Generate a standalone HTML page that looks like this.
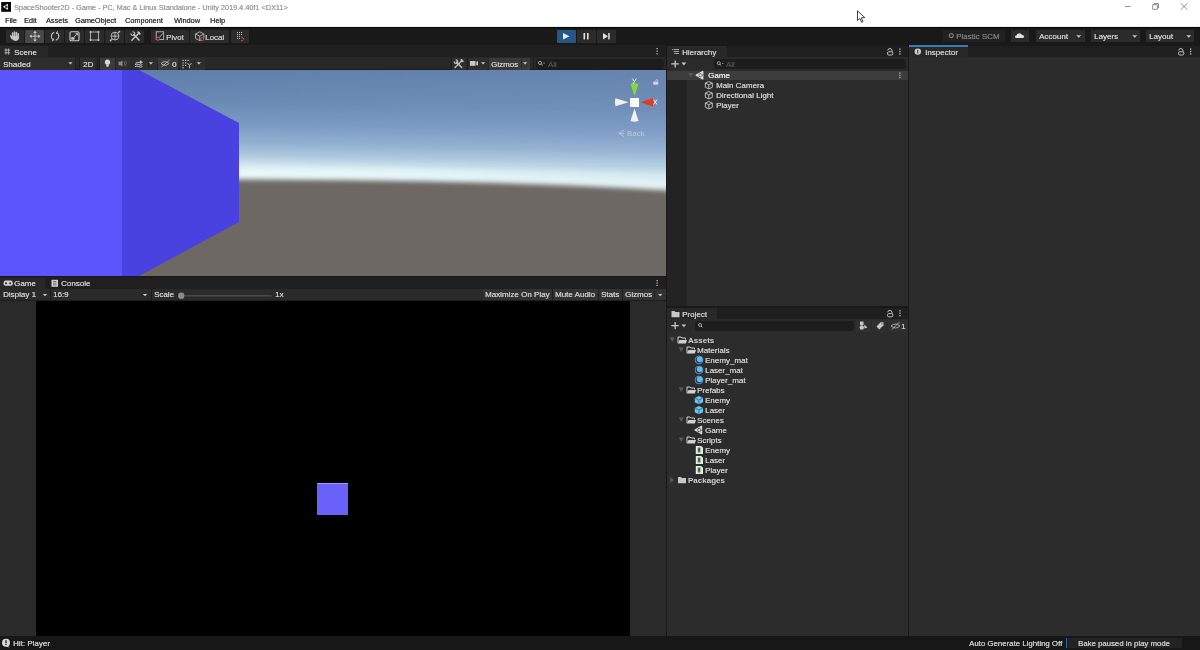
<!DOCTYPE html>
<html><head><meta charset="utf-8">
<style>
*{margin:0;padding:0;box-sizing:border-box}
html,body{width:1200px;height:650px;overflow:hidden;background:#191919;font-family:"Liberation Sans",sans-serif;}
.a{position:absolute}
.t{position:absolute;white-space:nowrap;color:#c4c4c4;font-size:8px;line-height:10px;margin-top:1px;-webkit-font-smoothing:antialiased;will-change:transform;text-shadow:0.2px 0 0 currentColor}
#title{left:0;top:0;width:1200px;height:27px;background:#fff}
#tb{left:0;top:27px;width:1200px;height:18px;background:#191919}
.btn{position:absolute;background:#2b2b2b;border-radius:1px}
.panel{position:absolute;background:#2c2c2c}
.strip{position:absolute;background:#1f1f1f}
.tab{position:absolute;background:#282828}
.ptb{position:absolute;background:#2a2a2a}
</style></head><body>
<!-- title bar -->
<div id="title" class="a">
  <svg class="a" style="left:0;top:0" width="13" height="14" viewBox="0 0 13 14"><rect x="1.2" y="2" width="9.8" height="9.8" fill="#050505"/>
<path d="M3.8,6.8 L7.4,4.4 L7.4,9.2 Z" fill="#8a8a8a" stroke="#8a8a8a" stroke-width="1.2" stroke-linejoin="round"/>
<circle cx="6.2" cy="6.8" r="0.9" fill="#222"/>
<circle cx="4.3" cy="6.8" r="0.8" fill="#fff"/><circle cx="7.3" cy="5.1" r="0.8" fill="#fff"/><circle cx="7.3" cy="8.5" r="0.8" fill="#fff"/></svg>
  <div class="t" style="left:14px;top:1.5px;color:#a0a0a0;font-size:7.3px">SpaceShooter2D - Game - PC, Mac &amp; Linux Standalone - Unity 2019.4.40f1 &lt;DX11&gt;</div>
  <div class="t" style="left:4.5px;top:15.2px;color:#3a3a3a;font-size:7.3px">File</div>
  <div class="t" style="left:24.4px;top:15.2px;color:#3a3a3a;font-size:7.3px">Edit</div>
  <div class="t" style="left:45.6px;top:15.2px;color:#3a3a3a;font-size:7.3px">Assets</div>
  <div class="t" style="left:75px;top:15.2px;color:#3a3a3a;font-size:7.3px">GameObject</div>
  <div class="t" style="left:125px;top:15.2px;color:#3a3a3a;font-size:7.3px">Component</div>
  <div class="t" style="left:173.7px;top:15.2px;color:#3a3a3a;font-size:7.3px">Window</div>
  <div class="t" style="left:210px;top:15.2px;color:#3a3a3a;font-size:7.3px">Help</div>
  <div class="a" style="left:0;top:26px;width:1200px;height:1px;background:#f0f0f0"></div>
  <svg class="a" style="left:1120px;top:0" width="80" height="14" viewBox="0 0 80 14">
    <path d="M5,6.5 H10.5" stroke="#666" stroke-width="0.7"/>
    <path d="M32.7,4.7 H37.3 V9.3 H32.7 Z M34,4.7 V3.5 H38.5 V8 H37.3" fill="none" stroke="#666" stroke-width="0.7"/>
    <path d="M60.7,3.3 L67.5,9.7 M67.5,3.3 L60.7,9.7" stroke="#666" stroke-width="0.7"/>
  </svg>
  <svg class="a" style="left:856px;top:10px" width="10" height="14" viewBox="0 0 10 14"><path d="M1.5,0.8 L1.5,10.5 L3.8,8.4 L5.6,12.2 L7,11.6 L5.3,7.8 L8.8,7.6 Z" fill="#fff" stroke="#111" stroke-width="0.8" stroke-linejoin="round"/></svg>
</div>
<!-- main toolbar -->
<div id="tb" class="a">
  <div class="a" style="left:0;top:0;width:1200px;height:1px;background:#050505"></div>
  <div class="btn" style="left:6px;top:3px;width:18px;height:12.5px"></div>
  <div class="btn" style="left:25px;top:3px;width:19px;height:12.5px;background:#484848"></div>
  <div class="btn" style="left:45px;top:3px;width:19px;height:12.5px"></div>
  <div class="btn" style="left:65px;top:3px;width:19px;height:12.5px"></div>
  <div class="btn" style="left:85px;top:3px;width:19px;height:12.5px"></div>
  <div class="btn" style="left:105px;top:3px;width:19px;height:12.5px"></div>
  <div class="btn" style="left:125px;top:3px;width:19px;height:12.5px"></div>
  <div class="btn" style="left:151px;top:3px;width:38px;height:12.5px"></div>
  <div class="btn" style="left:190px;top:3px;width:39px;height:12.5px"></div>
  <div class="btn" style="left:231px;top:3px;width:18px;height:12.5px"></div>
  <svg class="a" style="left:0;top:0" width="260" height="18" viewBox="0 27 260 18">
    <g fill="none" stroke="#c8c8c8" stroke-linecap="round" stroke-linejoin="round">
      <!-- hand -->
      <g stroke="#c8c8c8" stroke-width="1.5" stroke-linecap="round">
        <path d="M12.6,33 V37.5 M14.5,32.1 V37 M16.4,32.5 V37 M18.2,33.8 V37.5 M10.6,35.8 L12.2,38.6"/>
      </g>
      <path d="M11.9,36.3 H18.9 V38.5 Q18.5,40.9 15.6,40.9 Q13,40.9 12,38.5 Z" fill="#c8c8c8" stroke="none"/>
      <!-- move -->
      <path d="M35,32 V40.5 M30.8,36.2 H39.2" stroke-width="0.9"/>
    </g>
    <g fill="#c8c8c8">
      <path d="M35,30.8 L33.2,33 L36.8,33 Z M35,41.8 L33.2,39.5 L36.8,39.5 Z M29.5,36.2 L31.8,34.4 L31.8,38 Z M40.5,36.2 L38.2,34.4 L38.2,38 Z"/>
    </g>
    <g fill="none" stroke="#c8c8c8" stroke-width="1.1">
      <!-- rotate -->
      <path d="M53.3,40 A4.3,4.3 0 0 1 54.2,32.3"/>
      <path d="M56.7,32.4 A4.3,4.3 0 0 1 55.8,40.2"/>
      <path d="M52,41 L53.6,40.2 L53.5,38.5 M58,31.5 L56.5,32.3 L56.7,34" stroke-width="0.9"/>
      <!-- scale -->
      <rect x="70" y="31.7" width="9" height="9" rx="1.3"/>
      <rect x="71.3" y="37.2" width="3.2" height="2.5" fill="#c8c8c8" stroke="none"/>
      <path d="M74,37 L77.3,33.5 M75.5,33.3 L77.5,33.3 L77.5,35.3" stroke-width="0.9"/>
      <!-- rect -->
      <rect x="90.5" y="32" width="8" height="8" stroke-width="0.8"/>
    </g>
    <g fill="#c8c8c8">
      <circle cx="90.5" cy="32" r="1"/><circle cx="98.5" cy="32" r="1"/><circle cx="90.5" cy="40" r="1"/><circle cx="98.5" cy="40" r="1"/>
    </g>
    <g fill="none" stroke="#c8c8c8" stroke-width="0.9">
      <!-- transform -->
      <circle cx="115" cy="36.1" r="3.9" stroke-width="0.9"/>
      <path d="M115,32.5 V39.7 M111.4,36.1 H118.6" stroke-width="0.9"/>
      <path d="M110.6,40.5 L112.3,38.8 M117.7,33.4 L119.4,31.7" stroke-width="0.8"/>
    </g>
    <g fill="#c8c8c8"><circle cx="110.6" cy="40.5" r="0.9"/><circle cx="119.4" cy="31.7" r="0.9"/></g>
    <g fill="none" stroke="#c8c8c8">
      <!-- custom tool -->
      <path d="M133.8,34.6 L139,40" stroke-width="1.5" stroke-linecap="round"/>
      <path d="M132.47,31.73 A1.9,1.9 0 1 1 130.93,33.27" stroke-width="1.1"/>
      <path d="M139,33 L131.8,40.3" stroke-width="1.3" stroke-linecap="round"/>
      <path d="M138.2,32.2 L139.8,33.8" stroke-width="1.8" stroke-linecap="round"/>
    </g>
    <!-- pivot icon -->
    <g fill="none" stroke="#c8c8c8" stroke-width="0.8">
      <rect x="156.2" y="31.8" width="7.5" height="7.8"/>
      <path d="M159,37.8 L163,33.3"/>

      <path d="M195.5,34 L199.7,31.8 L203.9,34 L203.9,38.4 L199.7,40.6 L195.5,38.4 Z M195.5,34 L199.7,36.2 L203.9,34 M199.7,36.2 V40.6"/>
    </g>
    <circle cx="158" cy="38.8" r="1.5" fill="#2b2b2b" stroke="#e0533a" stroke-width="0.9"/>
    <circle cx="202.2" cy="39.1" r="1.5" fill="#2b2b2b" stroke="#e0533a" stroke-width="0.9"/>
    <g fill="#c8c8c8">
      <rect x="237" y="32" width="1" height="1"/><rect x="239" y="32" width="1" height="1"/><rect x="241" y="32" width="1" height="1"/>
      <rect x="237" y="34" width="1" height="1"/><rect x="239" y="34" width="1" height="1"/><rect x="241" y="34" width="1" height="1"/>
      <rect x="237" y="36" width="1" height="1"/><rect x="239" y="36" width="1" height="1"/>
      <rect x="237" y="38" width="1" height="1"/><rect x="239" y="38" width="1" height="1"/>
    </g>
    <path d="M241,37 Q244,37.5 243.5,39.5 Q243,41 241,40.8" fill="none" stroke="#e0533a" stroke-width="0.9"/>
  </svg>
  <div class="t" style="left:165.6px;top:4.9px;color:#c4c4c4">Pivot</div>
  <div class="t" style="left:205.2px;top:4.9px;color:#c4c4c4">Local</div>
  <div class="btn" style="left:557px;top:3px;width:18.6px;height:12.5px;background:#245686"></div>
  <div class="btn" style="left:577px;top:3px;width:18.6px;height:12.5px"></div>
  <div class="btn" style="left:597px;top:3px;width:18.6px;height:12.5px"></div>
  <svg class="a" style="left:540px;top:0" width="90" height="18" viewBox="540 27 90 18">
    <path d="M563,33 L569.5,36.2 L563,39.5 Z" fill="#e8e8e8"/>
    <rect x="583.5" y="33" width="1.6" height="6.4" fill="#e0e0e0"/>
    <rect x="587" y="33" width="1.6" height="6.4" fill="#e0e0e0"/>
    <path d="M603,33 L608,36.2 L603,39.5 Z" fill="#e0e0e0"/>
    <rect x="608.2" y="33" width="1.5" height="6.4" fill="#e0e0e0"/>
  </svg>
  <div class="btn" style="left:942.5px;top:3px;width:62px;height:12px;background:#212121"></div>
  <div class="t" style="left:955.5px;top:4.2px;color:#7a7a7a">Plastic SCM</div>
  <svg class="a" style="left:948px;top:5px" width="8" height="8" viewBox="0 0 8 8"><circle cx="3.3" cy="3.6" r="2" fill="none" stroke="#7a7a7a" stroke-width="1.1"/></svg>
  <div class="btn" style="left:1011px;top:3px;width:18px;height:12px"></div>
  <svg class="a" style="left:1011px;top:0" width="18" height="18" viewBox="0 0 18 18"><path d="M5.5,11 Q4,11 4,9.7 Q4,8.4 5.5,8.4 Q5.8,6.5 8.2,6.3 Q10.5,6.3 11,8 Q13,7.8 13.2,9.6 Q13.2,11 11.8,11 Z" fill="#e0e0e0"/></svg>
  <div class="btn" style="left:1036px;top:3px;width:48.5px;height:12px"></div>
  <div class="t" style="left:1039px;top:4.2px;color:#c8c8c8">Account</div>
  <div class="btn" style="left:1091px;top:3px;width:48.5px;height:12px"></div>
  <div class="t" style="left:1093.7px;top:4.2px;color:#c8c8c8">Layers</div>
  <div class="btn" style="left:1146px;top:3px;width:48px;height:12px"></div>
  <div class="t" style="left:1149px;top:4.2px;color:#c8c8c8">Layout</div>
  <svg class="a" style="left:1070px;top:0" width="130" height="18" viewBox="1070 27 130 18">
    <path d="M1076.3,35.2 L1081.2,35.2 L1078.75,37.8 Z M1132.3,35.2 L1137.2,35.2 L1134.75,37.8 Z M1186.3,35.2 L1191.2,35.2 L1188.75,37.8 Z" fill="#c8c8c8"/>
  </svg>
</div>
<!-- scene panel -->
<div class="strip" style="left:0;top:45px;width:666px;height:12px"></div>
<div class="tab" style="left:0;top:46px;width:47.5px;height:11px"></div>
<svg class="a" style="left:0;top:45px" width="666" height="12" viewBox="0 45 666 12">
  <path d="M6,48.5 V54.5 M8.6,48.5 V54.5 M4.5,50 H10.2 M4.5,52.8 H10.2" stroke="#c8c8c8" stroke-width="0.8" fill="none"/>
  <rect x="656.5" y="48" width="1.2" height="1.2" fill="#c8c8c8"/><rect x="656.5" y="50.6" width="1.2" height="1.2" fill="#c8c8c8"/><rect x="656.5" y="53.2" width="1.2" height="1.2" fill="#c8c8c8"/>
</svg>
<div class="t" style="left:14.3px;top:46.5px;color:#c8c8c8">Scene</div>
<div class="ptb" style="left:0;top:57px;width:666px;height:13px;background:#282828"></div>
<div class="a" style="left:0;top:69.3px;width:666px;height:0.7px;background:#1a1a1a"></div>
<div class="a" style="left:0;top:57.5px;width:75px;height:12px;background:#2d2d2d"></div>
<div class="a" style="left:80px;top:58px;width:15px;height:11.5px;background:#2e2e2e"></div>
<div class="a" style="left:116px;top:58px;width:14.6px;height:11.5px;background:#2e2e2e"></div>
<div class="a" style="left:131.7px;top:58px;width:25.3px;height:11.5px;background:#2e2e2e"></div>
<div class="a" style="left:180px;top:58px;width:24.7px;height:11.5px;background:#2e2e2e"></div>
<div class="a" style="left:452px;top:58px;width:13.6px;height:11.5px;background:#2e2e2e"></div>
<div class="a" style="left:467.5px;top:58px;width:20px;height:11.5px;background:#2e2e2e"></div>
<div class="a" style="left:147.7px;top:59.5px;width:0.8px;height:8.5px;background:#222"></div>
<div class="a" style="left:194.3px;top:59.5px;width:0.8px;height:8.5px;background:#222"></div>
<div class="t" style="left:2.5px;top:58.5px;color:#c8c8c8">Shaded</div>
<div class="a" style="left:75px;top:57px;width:1px;height:13px;background:#1c1c1c"></div>
<div class="a" style="left:78.5px;top:57px;width:1px;height:13px;background:#1c1c1c"></div>
<div class="t" style="left:82.5px;top:58.5px;color:#c8c8c8">2D</div>
<div class="a" style="left:96.5px;top:57px;width:1px;height:13px;background:#1c1c1c"></div>
<div class="a" style="left:98.5px;top:57px;width:1px;height:13px;background:#1c1c1c"></div>
<div class="a" style="left:100px;top:58px;width:15px;height:11.5px;background:#393939"></div>
<div class="a" style="left:158px;top:58px;width:20px;height:11.5px;background:#393939"></div>
<div class="a" style="left:489px;top:58px;width:41px;height:11.5px;background:#393939"></div>
<div class="a" style="left:450.6px;top:57px;width:1px;height:13px;background:#1c1c1c"></div>
<div class="a" style="left:466.5px;top:57px;width:1px;height:13px;background:#1c1c1c"></div>
<div class="a" style="left:532.5px;top:57px;width:1px;height:13px;background:#1c1c1c"></div>
<div class="a" style="left:520.5px;top:59px;width:1px;height:9px;background:#2a2a2a"></div>
<div class="a" style="left:535.6px;top:59px;width:128px;height:10px;background:#1d1d1d;border-radius:3px"></div>
<div class="t" style="left:491px;top:58.5px;color:#c8c8c8">Gizmos</div>
<div class="t" style="left:547.5px;top:58.5px;color:#606060;text-shadow:none">All</div>
<div class="t" style="left:172px;top:58.5px;color:#c8c8c8">0</div>
<svg class="a" style="left:0;top:57px" width="666" height="13" viewBox="0 57 666 13">
  <g fill="#c8c8c8">
    <path d="M68.3,62.3 L72.5,62.3 L70.4,64.5 Z"/>
    <path d="M148.8,62.3 L153,62.3 L150.9,64.5 Z"/>
    <path d="M196.8,62.3 L201,62.3 L198.9,64.5 Z"/>
    <path d="M481,62.3 L485.2,62.3 L483.1,64.5 Z"/>
    <path d="M523,62.3 L527.2,62.3 L525.1,64.5 Z"/>
  </g>
  <!-- light bulb -->
  <circle cx="107.5" cy="62.2" r="2.6" fill="#d8d8d8"/>
  <rect x="106.3" y="64.5" width="2.4" height="2.2" fill="#d8d8d8"/>
  <!-- audio -->
  <path d="M118.5,61.8 H120.5 L122.5,60.5 V66.5 L120.5,65.2 H118.5 Z" fill="#8a8a8a"/>
  <path d="M124,61.5 Q125,63.5 124,65.5 M125.6,60.8 Q127,63.5 125.6,66.2" stroke="#8a8a8a" stroke-width="0.6" fill="none"/>
  <!-- effects -->
  <path d="M135,64.6 Q137,63.5 138.8,64.6 Q140.6,65.7 142.4,64.6 M135,66.6 Q137,65.5 138.8,66.6 Q140.6,67.7 142.4,66.6" stroke="#c8c8c8" stroke-width="1" fill="none"/>
  <path d="M135.5,63.2 Q137.3,61.8 139,62.6" stroke="#c8c8c8" stroke-width="0.9" fill="none"/>
  <path d="M140.8,59.8 L141.5,61.5 L143.2,62.2 L141.5,62.9 L140.8,64.6 L140.1,62.9 L138.4,62.2 L140.1,61.5 Z" fill="#c8c8c8"/>
  <!-- hidden eye -->
  <path d="M161,63.5 Q165,59.8 169,63.5 Q165,67.2 161,63.5 Z" stroke="#c8c8c8" stroke-width="0.8" fill="none"/>
  <path d="M161.5,67 L169.5,60" stroke="#c8c8c8" stroke-width="0.8"/>
  <!-- grid -->
  <g fill="#c8c8c8"><rect x="182.5" y="59.8" width="1.2" height="1.2"/><rect x="185" y="59.8" width="1.2" height="1.2"/><rect x="187.5" y="59.8" width="1.2" height="1.2"/><rect x="182.5" y="62.3" width="1.2" height="1.2"/><rect x="185" y="62.3" width="1.2" height="1.2"/><rect x="182.5" y="64.8" width="1.2" height="1.2"/><rect x="182.5" y="67.2" width="1.2" height="1.2"/><rect x="185" y="64.8" width="1.2" height="1.2"/></g>
  <path d="M187.5,63 L189.5,65.5 L191.5,63 M189.5,65.5 V68.2" stroke="#c8c8c8" stroke-width="0.9" fill="none"/>
  <!-- tools -->
  <path d="M456.3,62 L461.7,67.4" stroke="#c8c8c8" stroke-width="1.4" stroke-linecap="round"/>
  <path d="M455.67,59.9 A1.8,1.8 0 1 1 454.2,61.4" stroke="#c8c8c8" stroke-width="1.05" fill="none"/>
  <path d="M462,60.5 L455,67.5" stroke="#c8c8c8" stroke-width="1.2" stroke-linecap="round"/>
  <path d="M461.3,59.8 L462.8,61.3" stroke="#c8c8c8" stroke-width="1.7" stroke-linecap="round"/>
  <!-- camera -->
  <rect x="470" y="61" width="5.5" height="4.8" fill="#c8c8c8"/>
  <path d="M476.2,62 L478,61 V65.8 L476.2,64.8 Z" fill="#c8c8c8"/>
  <!-- search -->
  <circle cx="540" cy="62.9" r="1.6" fill="none" stroke="#c8c8c8" stroke-width="0.8"/>
  <path d="M541.2,64 L542.8,65.4" stroke="#c8c8c8" stroke-width="0.8"/>
  <path d="M543,62.8 L545,62.8 L544,63.8 Z" fill="#c8c8c8"/>
</svg>
<svg class="a" style="left:0;top:70px" width="666" height="206" viewBox="0 70 666 206">
<defs>
<linearGradient id="sky" x1="0" y1="70" x2="0" y2="276" gradientUnits="userSpaceOnUse" gradientTransform="rotate(1.2 400 180)">
<stop offset="0" stop-color="#5a7aa6"/>
<stop offset="0.17" stop-color="#6586b2"/>
<stop offset="0.28" stop-color="#7696c1"/>
<stop offset="0.37" stop-color="#8eaece"/>
<stop offset="0.43" stop-color="#acc8de"/>
<stop offset="0.48" stop-color="#d0e6ee"/>
<stop offset="0.53" stop-color="#e0f2f4"/>
<stop offset="0.6" stop-color="#e0f2f4"/>
</linearGradient>
<linearGradient id="bandfade" x1="0" y1="0" x2="666" y2="0" gradientUnits="userSpaceOnUse">
<stop offset="0" stop-color="#f2ffff" stop-opacity="0.85"/>
<stop offset="0.6" stop-color="#f2ffff" stop-opacity="0.7"/>
<stop offset="1" stop-color="#e8f4f4" stop-opacity="0.35"/>
</linearGradient>
<filter id="bl" x="-5%" y="-20%" width="110%" height="140%"><feGaussianBlur stdDeviation="2.4"/></filter>
<filter id="bl2" x="-5%" y="-50%" width="110%" height="200%"><feGaussianBlur stdDeviation="3.5"/></filter>
</defs>
<rect x="0" y="70" width="666" height="206" fill="url(#sky)"/>
<path d="M-10,166 L240,168.5 C400,169 550,172 676,180 L676,188 C550,180 400,177 240,177 L-10,175 Z" fill="url(#bandfade)" filter="url(#bl2)"/>
<linearGradient id="tr" x1="0" y1="0" x2="666" y2="0" gradientUnits="userSpaceOnUse"><stop offset="0" stop-color="#fff" stop-opacity="0"/><stop offset="1" stop-color="#dfeaff" stop-opacity="0.1"/></linearGradient>
<rect x="0" y="70" width="666" height="95" fill="url(#tr)"/>
<path d="M-10,178 L240,179.5 C400,180 550,183 676,191 L676,290 L-10,290 Z" fill="#6d6763" filter="url(#bl)"/>
<polygon points="0,70 122,70 122,276 0,276" fill="#5c55fb"/>
<polygon points="122,70 139,70 239,123 239,222 139,276 122,276" fill="#4a42e0"/>
<g>
  <path d="M630.5,84 Q634.5,82.5 638.5,84 L634.5,96 Z" fill="#86d83a"/>
  <path d="M653,98 Q654.5,102.3 653,106.5 L640.5,102.3 Z" fill="#e23c1e"/>
  <path d="M615.5,98.2 Q614,102.3 615.5,106.3 L628.5,102.3 Z" fill="#f0f0ec"/>
  <path d="M630.5,121 Q634.5,122.5 638.5,121 L634.5,108.5 Z" fill="#f0f0ec"/>
  <rect x="630" y="98" width="9" height="9" fill="#fafafa"/>
  <path d="M632.3,78.5 L634.3,81.5 M636.3,78.5 L633,84" stroke="#f4f4f4" stroke-width="0.9" fill="none"/>
  <path d="M653.5,99.5 L657,104.5 M657,99.5 L653.5,104.5" stroke="#f4f4f4" stroke-width="0.9" fill="none"/>
  <path d="M655.5,80.5 A1.6,1.6 0 0 1 658.3,80.8" stroke="#d0d4d8" stroke-width="0.8" fill="none"/>
  <rect x="653.2" y="81.5" width="5" height="3.2" fill="#d0d4d8"/>
  <path d="M624,130.3 L618.8,133.4 L624,136.5 M624,133.4 H619.5" stroke="#c8cdc8" stroke-width="0.75" fill="none"/>
</g>
</svg>
<div class="t" style="left:626.5px;top:127.8px;color:#c4c8c4;font-size:8px;text-shadow:none">Back</div>
<!-- game panel -->
<div class="strip" style="left:0;top:277px;width:666px;height:12px"></div>
<div class="tab" style="left:0;top:277.5px;width:45.4px;height:11.5px"></div>
<svg class="a" style="left:0;top:277px" width="666" height="12" viewBox="0 277 666 12">
  <path d="M5.5,280.6 H10.8 Q12.8,280.6 12.8,283.2 Q12.8,285.8 10.8,285.8 H5.5 Q3.5,285.8 3.5,283.2 Q3.5,280.6 5.5,280.6 Z" fill="#d0d0d0"/>
  <circle cx="6" cy="283.2" r="1" fill="#282828"/><circle cx="10.2" cy="283.2" r="1" fill="#282828"/>
  <rect x="51.5" y="279.8" width="6.5" height="7" fill="#d0d0d0"/>
  <path d="M53,281.5 H56.5 M53,283.2 H56.5 M53,284.9 H56.5" stroke="#333" stroke-width="0.6"/>
  <rect x="656.5" y="280" width="1.2" height="1.2" fill="#c8c8c8"/><rect x="656.5" y="282.4" width="1.2" height="1.2" fill="#c8c8c8"/><rect x="656.5" y="284.8" width="1.2" height="1.2" fill="#c8c8c8"/>
</svg>
<div class="t" style="left:14.2px;top:277.9px;color:#c8c8c8">Game</div>
<div class="t" style="left:61px;top:277.9px;color:#c8c8c8">Console</div>
<div class="ptb" style="left:0;top:288.5px;width:666px;height:12.5px"></div>
<div class="a" style="left:483px;top:289px;width:183px;height:11.5px;background:#323232"></div>
<div class="a" style="left:49.8px;top:289px;width:1px;height:12px;background:#1c1c1c"></div>
<div class="a" style="left:0;top:300.4px;width:666px;height:0.8px;background:#1e1e1e"></div>
<div class="a" style="left:150.5px;top:289px;width:1px;height:12px;background:#1c1c1c"></div>
<div class="a" style="left:552.4px;top:289px;width:1px;height:12px;background:#1c1c1c"></div>
<div class="a" style="left:597.7px;top:289px;width:1px;height:12px;background:#1c1c1c"></div>
<div class="a" style="left:621.8px;top:289px;width:1px;height:12px;background:#1c1c1c"></div>
<div class="a" style="left:654px;top:290px;width:1px;height:10px;background:#262626"></div>
<div class="t" style="left:2.7px;top:289.3px;color:#c8c8c8">Display 1</div>
<div class="t" style="left:52.7px;top:289.3px;color:#c8c8c8">16:9</div>
<div class="t" style="left:154.4px;top:289.3px;color:#c8c8c8">Scale</div>
<div class="t" style="left:275.2px;top:289.3px;color:#c8c8c8">1x</div>
<div class="t" style="left:485.2px;top:289.3px;color:#c8c8c8">Maximize On Play</div>
<div class="t" style="left:555px;top:289.3px;color:#c8c8c8">Mute Audio</div>
<div class="t" style="left:600.5px;top:289.3px;color:#c8c8c8">Stats</div>
<div class="t" style="left:625.2px;top:289.3px;color:#c8c8c8">Gizmos</div>
<svg class="a" style="left:0;top:288px" width="666" height="14" viewBox="0 288 666 14">
  <g fill="#c8c8c8">
    <path d="M42.8,294 L47.2,294 L45,296.2 Z"/>
    <path d="M142.8,294 L147.2,294 L145,296.2 Z"/>
    <path d="M658,293.9 L662.4,293.9 L660.2,296.2 Z"/>
  </g>
  <rect x="184.5" y="295.4" width="87" height="0.9" fill="#606060"/>
  <circle cx="181.2" cy="295.8" r="3.2" fill="#8c8c8c"/>
</svg>
<div class="a" style="left:0;top:301px;width:666px;height:335px;background:#2a2a2a"></div>
<div class="a" style="left:36px;top:301px;width:594px;height:335px;background:#000"></div>
<div class="a" style="left:317.3px;top:482.8px;width:30.7px;height:32px;background:#6a61fb;border-top:1px solid #9d96ff"></div>
<!-- hierarchy -->
<div class="strip" style="left:667px;top:46px;width:241px;height:11px"></div>
<div class="tab" style="left:667px;top:46px;width:60px;height:11px"></div>
<div class="ptb" style="left:667px;top:57px;width:241px;height:13px"></div>
<div class="panel" style="left:667px;top:70px;width:241px;height:235.5px"></div>
<div class="a" style="left:667px;top:80px;width:20px;height:225.5px;background:#232323"></div>
<div class="a" style="left:667px;top:70.5px;width:241px;height:9.5px;background:#3c3c3c"></div>
<div class="a" style="left:714px;top:59px;width:192px;height:9.6px;background:#1d1d1d;border-radius:3px"></div>
<div class="t" style="left:681.7px;top:47px;color:#c8c8c8">Hierarchy</div>
<div class="t" style="left:726px;top:58.5px;color:#606060;text-shadow:none">All</div>
<svg class="a" style="left:666px;top:45px" width="243" height="70" viewBox="666 45 243 70">
  <g fill="#c8c8c8">
    <rect x="672" y="49" width="0.9" height="0.8"/><rect x="673.6" y="49" width="5.4" height="0.8"/>
    <rect x="673.6" y="51" width="5.4" height="0.8"/><rect x="674.2" y="53" width="4.8" height="0.8"/>
    <rect x="899.3" y="48.5" width="1.3" height="1.3"/><rect x="899.3" y="50.9" width="1.3" height="1.3"/><rect x="899.3" y="53.3" width="1.3" height="1.3"/>
    <rect x="899.3" y="72.5" width="1.2" height="1.2"/><rect x="899.3" y="74.7" width="1.2" height="1.2"/><rect x="899.3" y="76.9" width="1.2" height="1.2"/>
    <path d="M674.5,60.5 H675.8 V63.3 H678.8 V64.6 H675.8 V67.5 H674.5 V64.6 H671.3 V63.3 H674.5 Z"/>
    <path d="M681.5,62.6 L686.3,62.6 L683.9,65.4 Z"/>
  </g>
  <path d="M887.8,50.5 Q887.8,48.5 890.0,48.5 Q892.2,48.5 892.2,51.8" fill="none" stroke="#d0d0d0" stroke-width="0.9"/>
  <rect x="887.5" y="51.8" width="5.3" height="3.2" rx="1.2" fill="none" stroke="#d0d0d0" stroke-width="0.9"/>
  <circle cx="718.8" cy="63.2" r="1.5" fill="none" stroke="#c0c0c0" stroke-width="0.8"/>
  <path d="M719.8,64.2 L721.3,65.6" stroke="#c0c0c0" stroke-width="0.8"/>
  <path d="M721.8,63 L723.6,63 L722.7,64 Z" fill="#c0c0c0"/>
  <!-- Game row triangle & unity icon -->
  <path d="M688.2,73 L693.2,73 L690.7,77.5 Z" fill="#5a5a5a"/>
  <path d="M696.20,75.20 L702.70,71.50 L702.70,78.90 Z" fill="#dcdcdc" stroke="#dcdcdc" stroke-width="1.40" stroke-linejoin="round"/><circle cx="700.50" cy="75.20" r="1.70" fill="none" stroke="#3c3c3c" stroke-width="0.90"/><path d="M700.50,75.20 L696.20,75.20 M700.50,75.20 L702.70,71.50 M700.50,75.20 L702.70,78.90" stroke="#dcdcdc" stroke-width="0.80"/>
  <!-- cube icons -->
  <g fill="none" stroke="#c8c8c8" stroke-width="0.9" stroke-linejoin="round">
    <path d="M705.3,83.1 L708.8,81.5 L712.3,83.1 L712.3,87.3 L708.8,88.9 L705.3,87.3 Z M705.3,83.1 L708.8,84.7 L712.3,83.1 M708.8,84.7 V88.9"/>
    <path d="M705.3,93.1 L708.8,91.5 L712.3,93.1 L712.3,97.3 L708.8,98.9 L705.3,97.3 Z M705.3,93.1 L708.8,94.7 L712.3,93.1 M708.8,94.7 V98.9"/>
    <path d="M705.3,103.1 L708.8,101.5 L712.3,103.1 L712.3,107.3 L708.8,108.9 L705.3,107.3 Z M705.3,103.1 L708.8,104.7 L712.3,103.1 M708.8,104.7 V108.9"/>
  </g>
</svg>
<div class="t" style="left:708px;top:70.1px;color:#e2e2e2;text-shadow:0.35px 0 0 #e2e2e2">Game</div>
<div class="t" style="left:715.8px;top:80.1px;color:#c8c8c8;">Main Camera</div>
<div class="t" style="left:715.8px;top:90.1px;color:#c8c8c8;">Directional Light</div>
<div class="t" style="left:715.8px;top:100.1px;color:#c8c8c8;">Player</div>
<!-- project -->
<div class="strip" style="left:667px;top:307.5px;width:241px;height:11px"></div>
<div class="tab" style="left:667px;top:308px;width:50px;height:11px"></div>
<div class="ptb" style="left:667px;top:319px;width:241px;height:13px"></div>
<div class="a" style="left:856px;top:319.5px;width:15px;height:12px;background:#2f2f2f"></div>
<div class="a" style="left:872px;top:319.5px;width:15px;height:12px;background:#2f2f2f"></div>
<div class="a" style="left:888px;top:319.5px;width:20px;height:12px;background:#2f2f2f"></div>
<div class="a" style="left:695px;top:320.5px;width:158.5px;height:10px;background:#1d1d1d;border-radius:3px"></div>
<div class="panel" style="left:667px;top:332px;width:241px;height:304px"></div>
<div class="t" style="left:682px;top:308.7px;color:#c8c8c8">Project</div>
<div class="t" style="left:901px;top:321px;color:#c8c8c8">1</div>
<div class="t" style="left:688.3px;top:334.5px;color:#d0d0d0;font-weight:bold;text-shadow:none;">Assets</div>
<div class="t" style="left:696.8px;top:344.5px;color:#c8c8c8;">Materials</div>
<div class="t" style="left:705.4px;top:354.5px;color:#c8c8c8;">Enemy_mat</div>
<div class="t" style="left:705.4px;top:364.5px;color:#c8c8c8;">Laser_mat</div>
<div class="t" style="left:705.4px;top:374.5px;color:#c8c8c8;">Player_mat</div>
<div class="t" style="left:696.8px;top:384.5px;color:#c8c8c8;">Prefabs</div>
<div class="t" style="left:705.4px;top:394.5px;color:#c8c8c8;">Enemy</div>
<div class="t" style="left:705.4px;top:404.5px;color:#c8c8c8;">Laser</div>
<div class="t" style="left:696.8px;top:414.5px;color:#c8c8c8;">Scenes</div>
<div class="t" style="left:705.4px;top:424.5px;color:#c8c8c8;">Game</div>
<div class="t" style="left:696.8px;top:434.5px;color:#c8c8c8;">Scripts</div>
<div class="t" style="left:705.4px;top:444.5px;color:#c8c8c8;">Enemy</div>
<div class="t" style="left:705.4px;top:454.5px;color:#c8c8c8;">Laser</div>
<div class="t" style="left:705.4px;top:464.5px;color:#c8c8c8;">Player</div>
<div class="t" style="left:688.3px;top:474.5px;color:#d0d0d0;font-weight:bold;text-shadow:none;">Packages</div>
<svg class="a" style="left:666px;top:305px" width="243" height="185" viewBox="666 305 243 185">
<g fill="#c8c8c8">
<path d="M674.5,322 H675.8 V325 H678.8 V326.3 H675.8 V329.3 H674.5 V326.3 H671.3 V325 H674.5 Z"/>
<path d="M681.5,324.4 L686.3,324.4 L683.9,327.2 Z"/>
<rect x="899.3" y="310.2" width="1.3" height="1.3"/><rect x="899.3" y="312.6" width="1.3" height="1.3"/><rect x="899.3" y="315" width="1.3" height="1.3"/>
<path d="M671.5,311 H674.5 L675.3,312 H679.5 V317.2 H671.5 Z"/>
</g>
<path d="M887.8,312.3 Q887.8,310.3 890.0,310.3 Q892.2,310.3 892.2,313.6" fill="none" stroke="#d0d0d0" stroke-width="0.9"/>
<rect x="887.5" y="313.6" width="5.3" height="3.2" rx="1.2" fill="none" stroke="#d0d0d0" stroke-width="0.9"/>
<circle cx="700" cy="325" r="1.5" fill="none" stroke="#c0c0c0" stroke-width="0.8"/><path d="M701,326 L702.5,327.4" stroke="#c0c0c0" stroke-width="0.8"/>
<rect x="860" y="321.5" width="3.5" height="3.5" fill="#c8c8c8"/><circle cx="861.8" cy="327.5" r="2.2" fill="#c8c8c8"/><path d="M864,324.5 L867.5,327.5 L864.5,328.5 Z" fill="#c8c8c8"/>
<path d="M876.5,326.5 L880.5,322.3 L883.5,322.3 L883.5,325.3 L879.3,329.5 Z" fill="#c8c8c8"/><circle cx="882" cy="323.8" r="0.6" fill="#2f2f2f"/>
<path d="M891,326 Q895.5,322 900,326 Q895.5,330 891,326 Z" fill="none" stroke="#c8c8c8" stroke-width="0.8"/><path d="M892,329.5 L899.5,322" stroke="#c8c8c8" stroke-width="0.8"/>
<path d="M669.7,337.5 L674.7,337.5 L672.2,342 Z" fill="#5a5a5a"/>
<path d="M678.0,343.2 V337 H681.0 L681.8,338 H685.5 V339.5" fill="none" stroke="#d0d0d0" stroke-width="1"/>
<path d="M678.0,343.5 L679.5,340 H687.0 L685.8,343.5 Z" fill="#d0d0d0"/>
<path d="M678.7,347.5 L683.7,347.5 L681.2,352 Z" fill="#5a5a5a"/>
<path d="M687.0,353.2 V347 H690.0 L690.8,348 H694.5 V349.5" fill="none" stroke="#d0d0d0" stroke-width="1"/>
<path d="M687.0,353.5 L688.5,350 H696.0 L694.8,353.5 Z" fill="#d0d0d0"/>
<circle cx="699.0" cy="360.0" r="3.9" fill="#2b3038" stroke="#5a9ad8" stroke-width="0.9"/>
<circle cx="699.7" cy="359.3" r="2.9" fill="#5cbaf2"/>
<circle cx="699.0" cy="370.0" r="3.9" fill="#2b3038" stroke="#5a9ad8" stroke-width="0.9"/>
<circle cx="699.7" cy="369.3" r="2.9" fill="#5cbaf2"/>
<circle cx="699.0" cy="380.0" r="3.9" fill="#2b3038" stroke="#5a9ad8" stroke-width="0.9"/>
<circle cx="699.7" cy="379.3" r="2.9" fill="#5cbaf2"/>
<path d="M678.7,387.5 L683.7,387.5 L681.2,392 Z" fill="#5a5a5a"/>
<path d="M687.0,393.2 V387 H690.0 L690.8,388 H694.5 V389.5" fill="none" stroke="#d0d0d0" stroke-width="1"/>
<path d="M687.0,393.5 L688.5,390 H696.0 L694.8,393.5 Z" fill="#d0d0d0"/>
<path d="M694.8,398 L698.9,396 L703.0,398 L703.0,402.2 L698.9,404.2 L694.8,402.2 Z" fill="#6cc4f4"/>
<path d="M695.1,398.1 L698.9,400 L702.7,398.1 M698.9,400 V404" stroke="#3a6a8a" stroke-width="0.9" fill="none"/>
<path d="M694.8,408 L698.9,406 L703.0,408 L703.0,412.2 L698.9,414.2 L694.8,412.2 Z" fill="#6cc4f4"/>
<path d="M695.1,408.1 L698.9,410 L702.7,408.1 M698.9,410 V414" stroke="#3a6a8a" stroke-width="0.9" fill="none"/>
<path d="M678.7,417.5 L683.7,417.5 L681.2,422 Z" fill="#5a5a5a"/>
<path d="M687.0,423.2 V417 H690.0 L690.8,418 H694.5 V419.5" fill="none" stroke="#d0d0d0" stroke-width="1"/>
<path d="M687.0,423.5 L688.5,420 H696.0 L694.8,423.5 Z" fill="#d0d0d0"/>
<path d="M695.00,430.00 L701.50,426.30 L701.50,433.70 Z" fill="#d8d8d8" stroke="#d8d8d8" stroke-width="1.40" stroke-linejoin="round"/><circle cx="699.30" cy="430.00" r="1.70" fill="none" stroke="#282828" stroke-width="0.90"/><path d="M699.30,430.00 L695.00,430.00 M699.30,430.00 L701.50,426.30 M699.30,430.00 L701.50,433.70" stroke="#d8d8d8" stroke-width="0.80"/>
<path d="M678.7,437.5 L683.7,437.5 L681.2,442 Z" fill="#5a5a5a"/>
<path d="M687.0,443.2 V437 H690.0 L690.8,438 H694.5 V439.5" fill="none" stroke="#d0d0d0" stroke-width="1"/>
<path d="M687.0,443.5 L688.5,440 H696.0 L694.8,443.5 Z" fill="#d0d0d0"/>
<path d="M695.8,446 H701.1 L703.0,447.8 V454 H695.8 Z" fill="#e8e8e8"/>
<rect x="697.8" y="447.5" width="2.6" height="5" fill="#3b8a3b"/>
<rect x="698.3" y="448.8" width="1.6" height="1.6" fill="#2a3a4a"/>
<path d="M695.8,456 H701.1 L703.0,457.8 V464 H695.8 Z" fill="#e8e8e8"/>
<rect x="697.8" y="457.5" width="2.6" height="5" fill="#3b8a3b"/>
<rect x="698.3" y="458.8" width="1.6" height="1.6" fill="#2a3a4a"/>
<path d="M695.8,466 H701.1 L703.0,467.8 V474 H695.8 Z" fill="#e8e8e8"/>
<rect x="697.8" y="467.5" width="2.6" height="5" fill="#3b8a3b"/>
<rect x="698.3" y="468.8" width="1.6" height="1.6" fill="#2a3a4a"/>
<path d="M670.2,477 L674.2,480 L670.2,483 Z" fill="#5a5a5a"/>
<path d="M678.0,477 H681.0 L681.8,478 H686.0 V483.3 H678.0 Z" fill="#c8c8c8"/>
</svg>
<!-- inspector -->
<div class="strip" style="left:909px;top:46px;width:291px;height:11px"></div>
<div class="tab" style="left:909px;top:47px;width:58.5px;height:10px"></div>
<div class="a" style="left:909px;top:45.3px;width:58.5px;height:1.7px;background:#3a79bb"></div>
<div class="panel" style="left:909px;top:57px;width:291px;height:579px"></div>
<div class="t" style="left:924.6px;top:47px;color:#c8c8c8">Inspector</div>
<svg class="a" style="left:909px;top:45px" width="291" height="12" viewBox="909 45 291 12">
  <circle cx="917.8" cy="51.6" r="3.2" fill="#d0d0d0"/>
  <rect x="917.3" y="49.8" width="1" height="3.6" fill="#282828"/>
  <path d="M1178.8,50.5 Q1178.8,48.5 1181.0,48.5 Q1183.2,48.5 1183.2,51.8" fill="none" stroke="#d0d0d0" stroke-width="0.9"/>
  <rect x="1178.5" y="51.8" width="5.3" height="3.2" rx="1.2" fill="none" stroke="#d0d0d0" stroke-width="0.9"/>
  <rect x="1190" y="48.5" width="1.3" height="1.3" fill="#c8c8c8"/><rect x="1190" y="50.9" width="1.3" height="1.3" fill="#c8c8c8"/><rect x="1190" y="53.3" width="1.3" height="1.3" fill="#c8c8c8"/>
</svg>
<!-- status -->
<div class="a" style="left:0;top:636px;width:1200px;height:14px;background:#171717"></div>
<svg class="a" style="left:0;top:636px" width="14" height="14" viewBox="0 636 14 14">
  <circle cx="6" cy="642.8" r="4" fill="#d8d8d8"/>
  <path d="M7.5,645.5 L9.5,647.5 L6,646.5 Z" fill="#d8d8d8"/>
  <rect x="5.3" y="640.2" width="1.4" height="3.2" fill="#333"/>
  <rect x="5.3" y="644" width="1.4" height="1.1" fill="#333"/>
</svg>
<div class="t" style="left:12.75px;top:638px;color:#c8c8c8">Hit: Player</div>
<div class="t" style="left:968.75px;top:638px;color:#c8c8c8;font-size:7.85px">Auto Generate Lighting Off</div>
<div class="a" style="left:1067.6px;top:638px;width:114.4px;height:10.4px;background:#232323"></div>
<div class="a" style="left:1066.3px;top:638px;width:1.1px;height:10.4px;background:#2a66a0"></div>
<div class="t" style="left:1078px;top:638px;color:#c8c8c8;font-size:7.8px">Bake paused in play mode</div>
</body></html>
